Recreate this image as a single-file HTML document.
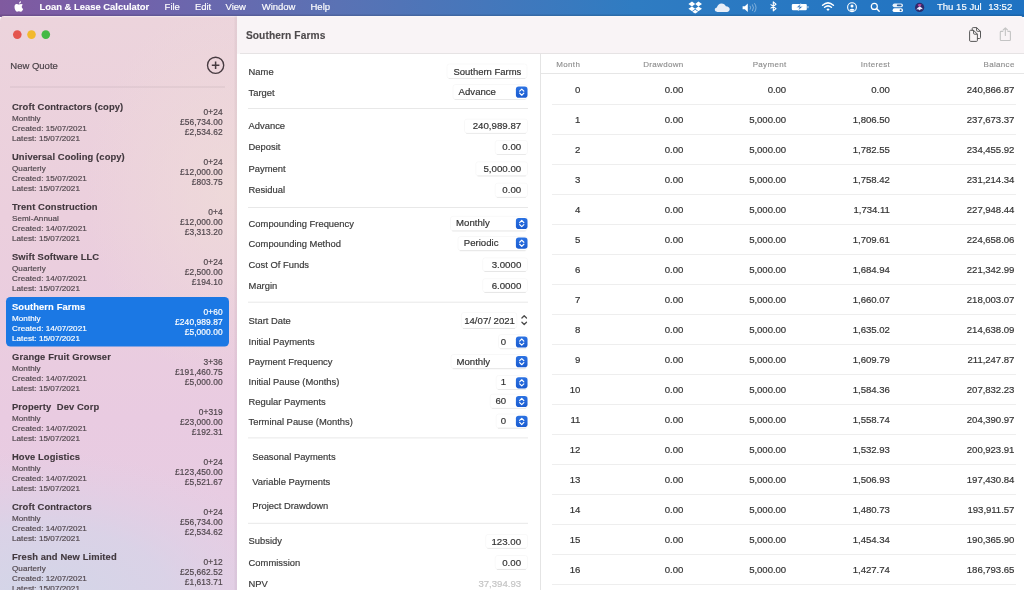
<!DOCTYPE html>
<html><head><meta charset="utf-8"><style>
html,body{margin:0;padding:0;width:1024px;height:590px;overflow:hidden;background:#fff}
svg{display:block;will-change:transform}
text{font-family:"Liberation Sans", sans-serif}
</style></head><body>
<svg width="1024" height="590" viewBox="0 0 1024 590">

<defs>
 <linearGradient id="mb" x1="0" y1="0" x2="1" y2="0">
  <stop offset="0" stop-color="#805a9f"/>
  <stop offset="0.08" stop-color="#785ea8"/>
  <stop offset="0.33" stop-color="#5a72b4"/>
  <stop offset="0.62" stop-color="#2f7cc2"/>
  <stop offset="1" stop-color="#1e72c2"/>
 </linearGradient>
 <linearGradient id="sb" x1="0" y1="0" x2="0" y2="1">
  <stop offset="0" stop-color="#ecd4dc"/>
  <stop offset="0.35" stop-color="#ebcfdd"/>
  <stop offset="0.7" stop-color="#e9cbe1"/>
  <stop offset="1" stop-color="#e6cde3"/>
 </linearGradient>
 <radialGradient id="sbw" gradientUnits="userSpaceOnUse" cx="230" cy="190" r="160" gradientTransform="translate(230,190) scale(0.9,1.2) translate(-230,-190)">
  <stop offset="0" stop-color="#efdcd8" stop-opacity="0.75"/>
  <stop offset="1" stop-color="#efdcd8" stop-opacity="0"/>
 </radialGradient>
 <radialGradient id="sbl" gradientUnits="userSpaceOnUse" cx="40" cy="600" r="200" gradientTransform="translate(40,600) scale(1.3,0.75) translate(-40,-600)">
  <stop offset="0" stop-color="#d2d6e8" stop-opacity="1"/>
  <stop offset="0.5" stop-color="#d6d4e8" stop-opacity="0.75"/>
  <stop offset="1" stop-color="#e0d0e6" stop-opacity="0"/>
 </radialGradient>
 <linearGradient id="stp" x1="0" y1="0" x2="0" y2="1">
  <stop offset="0" stop-color="#2c72e2"/>
  <stop offset="1" stop-color="#195bd0"/>
 </linearGradient>
</defs>
<rect x="0" y="0" width="1024" height="17" fill="url(#mb)"/>
<rect x="0" y="14.5" width="1024" height="2" fill="#000" opacity="0.12"/>
<path d="M0 21 Q0 16 5 16 L1019 16 Q1024 16 1024 21 L1024 590 L0 590 Z" fill="#ffffff"/>
<path d="M0 21 Q0 16 5 16 L237 16 L237 590 L0 590 Z" fill="url(#sb)"/>
<rect x="0" y="16" width="237" height="574" fill="url(#sbw)"/>
<rect x="0" y="16" width="237" height="574" fill="url(#sbl)"/>
<rect x="234.5" y="16" width="2.5" height="574" fill="#000" opacity="0.035"/>
<rect x="237" y="16" width="782" height="38" fill="#f9f4f6"/>
<path d="M1019 16 Q1024 16 1024 21 L1024 54 L1019 54 Z" fill="#f9f4f6"/>
<rect x="240" y="53" width="784" height="1" fill="#e6e3e4"/>
<rect x="4" y="16" width="1016" height="1.2" fill="#fff" opacity="0.4"/>
<text x="39.5" y="10.3" font-size="9.42" font-weight="bold" fill="#ffffff" stroke="#ffffff" stroke-width="0.12">Loan &amp; Lease Calculator</text>
<text x="164.6" y="10.2" font-size="9.5" fill="#ffffff" stroke="#fff" stroke-width="0.15">File</text>
<text x="194.9" y="10.2" font-size="9.5" fill="#ffffff" stroke="#fff" stroke-width="0.15">Edit</text>
<text x="225.5" y="10.2" font-size="9.5" fill="#ffffff" stroke="#fff" stroke-width="0.15">View</text>
<text x="261.7" y="10.2" font-size="9.5" fill="#ffffff" stroke="#fff" stroke-width="0.15">Window</text>
<text x="310.5" y="10.2" font-size="9.5" fill="#ffffff" stroke="#fff" stroke-width="0.15">Help</text>
<text x="981.7" y="10.3" font-size="9.6" text-anchor="end" fill="#ffffff" stroke="#fff" stroke-width="0.15">Thu 15 Jul</text>
<text x="1012.3" y="10.3" font-size="9.6" text-anchor="end" fill="#ffffff" stroke="#fff" stroke-width="0.15">13:52</text>
<path d="M18.9 4.6 C17.9 4.6 17.3 4.1 16.6 4.1 C15.3 4.1 14.5 5.3 14.5 7.0 C14.5 9.2 15.9 11.7 17.0 11.7 C17.7 11.7 18.1 11.3 18.9 11.3 C19.7 11.3 20.0 11.7 20.8 11.7 C21.9 11.7 22.8 9.9 23.2 8.9 C22.2 8.4 21.8 7.6 21.8 6.7 C21.8 5.9 22.3 5.2 22.9 4.8 C22.4 4.2 21.7 4.1 21.2 4.1 C20.4 4.1 19.8 4.6 18.9 4.6 Z M19.0 3.6 C19.0 2.4 19.8 1.4 21.0 1.2 C21.1 2.5 20.2 3.6 19.0 3.6 Z" fill="#fff"/>
<path d="M692 1.6 L688.4 4 L692 6.4 L695.2 4 Z M698.4 1.6 L695.2 4 L698.4 6.4 L702 4 Z M688.4 8.8 L692 11.2 L695.2 8.8 L692 6.4 Z M702 8.8 L698.4 11.2 L695.2 8.8 L698.4 6.4 Z M692.2 11.8 L695.2 13.4 L698.2 11.8 L695.2 9.8 Z" fill="#fff"/>
<path d="M717.3 11.9 C715.8 11.9 714.8 10.9 714.8 9.6 C714.8 8.4 715.7 7.5 716.9 7.4 C717.3 5.2 719.1 3.4 721.6 3.4 C723.6 3.4 725.2 4.6 725.9 6.3 C728.1 6.3 729.7 7.8 729.7 9.2 C729.7 10.6 728.6 11.9 727 11.9 Z" fill="#e9eef7"/>
<path d="M742.6 6.2 H744.8 L747.8 3.4 V12.0 L744.8 9.2 H742.6 Z" fill="#fff"/>
<path d="M750 5.8 Q751.2 7.7 750 9.6 M752.3 4.4 Q754.6 7.7 752.3 11 M754.4 3.2 Q757.6 7.7 754.4 12.2" fill="none" stroke="#fff" stroke-opacity="0.45" stroke-width="0.9"/>
<path d="M770.6 4.4 L776 8.6 L773.3 10.8 V1.8 L776 4.2 L770.6 8.4" fill="none" stroke="#fff" stroke-width="1.1" stroke-linejoin="round"/>
<rect x="791.8" y="3.9" width="15" height="6.4" rx="1.2" fill="#fff"/>
<rect x="807.3" y="5.9" width="1.3" height="2.4" rx="0.5" fill="#fff" fill-opacity="0.6"/>
<path d="M800.9 3.6 L796.6 7.6 H799.4 L798.2 10.6 L802.6 6.6 H799.8 Z" fill="#2a70bc" stroke="#fff" stroke-width="0.5"/>
<path d="M822.6 5.2 Q828 0.6 833.4 5.2 M824.6 7.3 Q828 4.4 831.4 7.3" fill="none" stroke="#fff" stroke-width="1.5" stroke-linecap="round"/>
<path d="M826.4 9.2 Q828 7.6 829.6 9.2 L828 10.9 Z" fill="#fff"/>
<circle cx="852" cy="7.2" r="4.4" fill="none" stroke="#fff" stroke-width="1.1"/>
<circle cx="852" cy="5.9" r="1.5" fill="#fff"/><path d="M849.3 9.9 Q852 7.6 854.7 9.9 Q852 11.6 849.3 9.9 Z" fill="#fff"/>
<circle cx="874.3" cy="6.4" r="3.0" fill="none" stroke="#fff" stroke-width="1.2"/><path d="M876.5 8.6 L879.2 11.3" stroke="#fff" stroke-width="1.4" stroke-linecap="round"/>
<rect x="892.6" y="3.4" width="10.4" height="3.8" rx="1.9" fill="#e8f2fb"/><rect x="896.8" y="4.4" width="4.8" height="1.8" rx="0.9" fill="#2a5f9c"/>
<rect x="892.6" y="8.3" width="10.4" height="3.8" rx="1.9" fill="#fff"/><circle cx="900.6" cy="10.2" r="1.0" fill="#2a5f9c"/>
<circle cx="919.6" cy="7.4" r="4.6" fill="#2e2a6a"/><path d="M917.6 5 Q919.4 3 921.6 4.6 Q920.6 6.6 919.4 7.2 Z" fill="#c04a9a"/><path d="M916.2 9.6 Q918.4 6 920.4 6.8 Q921.6 7.6 923 9.2 Q920.2 8.4 919.6 10.6 Q918.6 8.6 916.2 9.6 Z" fill="#eef0ff"/>
<circle cx="17.3" cy="34.6" r="4.3" fill="#e4564f"/>
<circle cx="31.5" cy="34.6" r="4.3" fill="#f2b92e"/>
<circle cx="45.8" cy="34.6" r="4.3" fill="#43b944"/>
<text x="10.3" y="68.8" font-size="9.5" fill="#4a4248" stroke="#4a4248" stroke-width="0.18">New Quote</text>
<circle cx="215.6" cy="65.3" r="8.1" fill="none" stroke="#463a40" stroke-width="1.35"/>
<path d="M215.6 61.5 V69.1 M211.8 65.3 H219.4" stroke="#463a40" stroke-width="1.5"/>
<rect x="10" y="86.5" width="215" height="1" fill="#000" opacity="0.08"/>
<text x="12" y="110.1" font-size="9.4" font-weight="bold" fill="#41383e" stroke="#41383e" stroke-width="0.12" xml:space="preserve" letter-spacing="0.1">Croft Contractors (copy)</text>
<text x="12" y="120.8" font-size="8.1" fill="#50474d" stroke="#50474d" stroke-width="0.18" letter-spacing="0.05">Monthly</text>
<text x="12" y="130.8" font-size="8.1" fill="#50474d" stroke="#50474d" stroke-width="0.18" letter-spacing="0.05">Created: 15/07/2021</text>
<text x="12" y="140.7" font-size="8.1" fill="#50474d" stroke="#50474d" stroke-width="0.18" letter-spacing="0.05">Latest: 15/07/2021</text>
<text x="222.8" y="114.8" font-size="8.4" text-anchor="end" fill="#50474d" stroke="#50474d" stroke-width="0.18" letter-spacing="0.1">0+24</text>
<text x="222.8" y="124.9" font-size="8.4" text-anchor="end" fill="#50474d" stroke="#50474d" stroke-width="0.18" letter-spacing="0.1">£56,734.00</text>
<text x="222.8" y="134.8" font-size="8.4" text-anchor="end" fill="#50474d" stroke="#50474d" stroke-width="0.18" letter-spacing="0.1">£2,534.62</text>
<text x="12" y="160.1" font-size="9.4" font-weight="bold" fill="#41383e" stroke="#41383e" stroke-width="0.12" xml:space="preserve" letter-spacing="0.1">Universal Cooling (copy)</text>
<text x="12" y="170.8" font-size="8.1" fill="#50474d" stroke="#50474d" stroke-width="0.18" letter-spacing="0.05">Quarterly</text>
<text x="12" y="180.8" font-size="8.1" fill="#50474d" stroke="#50474d" stroke-width="0.18" letter-spacing="0.05">Created: 15/07/2021</text>
<text x="12" y="190.7" font-size="8.1" fill="#50474d" stroke="#50474d" stroke-width="0.18" letter-spacing="0.05">Latest: 15/07/2021</text>
<text x="222.8" y="164.8" font-size="8.4" text-anchor="end" fill="#50474d" stroke="#50474d" stroke-width="0.18" letter-spacing="0.1">0+24</text>
<text x="222.8" y="174.9" font-size="8.4" text-anchor="end" fill="#50474d" stroke="#50474d" stroke-width="0.18" letter-spacing="0.1">£12,000.00</text>
<text x="222.8" y="184.8" font-size="8.4" text-anchor="end" fill="#50474d" stroke="#50474d" stroke-width="0.18" letter-spacing="0.1">£803.75</text>
<text x="12" y="210.1" font-size="9.4" font-weight="bold" fill="#41383e" stroke="#41383e" stroke-width="0.12" xml:space="preserve" letter-spacing="0.1">Trent Construction</text>
<text x="12" y="220.8" font-size="8.1" fill="#50474d" stroke="#50474d" stroke-width="0.18" letter-spacing="0.05">Semi-Annual</text>
<text x="12" y="230.8" font-size="8.1" fill="#50474d" stroke="#50474d" stroke-width="0.18" letter-spacing="0.05">Created: 14/07/2021</text>
<text x="12" y="240.7" font-size="8.1" fill="#50474d" stroke="#50474d" stroke-width="0.18" letter-spacing="0.05">Latest: 15/07/2021</text>
<text x="222.8" y="214.8" font-size="8.4" text-anchor="end" fill="#50474d" stroke="#50474d" stroke-width="0.18" letter-spacing="0.1">0+4</text>
<text x="222.8" y="224.9" font-size="8.4" text-anchor="end" fill="#50474d" stroke="#50474d" stroke-width="0.18" letter-spacing="0.1">£12,000.00</text>
<text x="222.8" y="234.8" font-size="8.4" text-anchor="end" fill="#50474d" stroke="#50474d" stroke-width="0.18" letter-spacing="0.1">£3,313.20</text>
<text x="12" y="260.1" font-size="9.4" font-weight="bold" fill="#41383e" stroke="#41383e" stroke-width="0.12" xml:space="preserve" letter-spacing="0.1">Swift Software LLC</text>
<text x="12" y="270.8" font-size="8.1" fill="#50474d" stroke="#50474d" stroke-width="0.18" letter-spacing="0.05">Quarterly</text>
<text x="12" y="280.8" font-size="8.1" fill="#50474d" stroke="#50474d" stroke-width="0.18" letter-spacing="0.05">Created: 14/07/2021</text>
<text x="12" y="290.7" font-size="8.1" fill="#50474d" stroke="#50474d" stroke-width="0.18" letter-spacing="0.05">Latest: 15/07/2021</text>
<text x="222.8" y="264.8" font-size="8.4" text-anchor="end" fill="#50474d" stroke="#50474d" stroke-width="0.18" letter-spacing="0.1">0+24</text>
<text x="222.8" y="274.9" font-size="8.4" text-anchor="end" fill="#50474d" stroke="#50474d" stroke-width="0.18" letter-spacing="0.1">£2,500.00</text>
<text x="222.8" y="284.8" font-size="8.4" text-anchor="end" fill="#50474d" stroke="#50474d" stroke-width="0.18" letter-spacing="0.1">£194.10</text>
<rect x="6" y="297" width="223" height="49.5" rx="4.5" fill="#1b78e4"/>
<text x="12" y="310.1" font-size="9.4" font-weight="bold" fill="#ffffff" stroke="#ffffff" stroke-width="0.12" xml:space="preserve" letter-spacing="0.1">Southern Farms</text>
<text x="12" y="320.8" font-size="8.1" fill="#ffffff" stroke="#ffffff" stroke-width="0.18" letter-spacing="0.05">Monthly</text>
<text x="12" y="330.8" font-size="8.1" fill="#ffffff" stroke="#ffffff" stroke-width="0.18" letter-spacing="0.05">Created: 14/07/2021</text>
<text x="12" y="340.7" font-size="8.1" fill="#ffffff" stroke="#ffffff" stroke-width="0.18" letter-spacing="0.05">Latest: 15/07/2021</text>
<text x="222.8" y="314.8" font-size="8.4" text-anchor="end" fill="#ffffff" stroke="#ffffff" stroke-width="0.18" letter-spacing="0.1">0+60</text>
<text x="222.8" y="324.9" font-size="8.4" text-anchor="end" fill="#ffffff" stroke="#ffffff" stroke-width="0.18" letter-spacing="0.1">£240,989.87</text>
<text x="222.8" y="334.8" font-size="8.4" text-anchor="end" fill="#ffffff" stroke="#ffffff" stroke-width="0.18" letter-spacing="0.1">£5,000.00</text>
<text x="12" y="360.1" font-size="9.4" font-weight="bold" fill="#41383e" stroke="#41383e" stroke-width="0.12" xml:space="preserve" letter-spacing="0.1">Grange Fruit Growser</text>
<text x="12" y="370.8" font-size="8.1" fill="#50474d" stroke="#50474d" stroke-width="0.18" letter-spacing="0.05">Monthly</text>
<text x="12" y="380.8" font-size="8.1" fill="#50474d" stroke="#50474d" stroke-width="0.18" letter-spacing="0.05">Created: 14/07/2021</text>
<text x="12" y="390.7" font-size="8.1" fill="#50474d" stroke="#50474d" stroke-width="0.18" letter-spacing="0.05">Latest: 15/07/2021</text>
<text x="222.8" y="364.8" font-size="8.4" text-anchor="end" fill="#50474d" stroke="#50474d" stroke-width="0.18" letter-spacing="0.1">3+36</text>
<text x="222.8" y="374.9" font-size="8.4" text-anchor="end" fill="#50474d" stroke="#50474d" stroke-width="0.18" letter-spacing="0.1">£191,460.75</text>
<text x="222.8" y="384.8" font-size="8.4" text-anchor="end" fill="#50474d" stroke="#50474d" stroke-width="0.18" letter-spacing="0.1">£5,000.00</text>
<text x="12" y="410.1" font-size="9.4" font-weight="bold" fill="#41383e" stroke="#41383e" stroke-width="0.12" xml:space="preserve" letter-spacing="0.1">Property  Dev Corp</text>
<text x="12" y="420.8" font-size="8.1" fill="#50474d" stroke="#50474d" stroke-width="0.18" letter-spacing="0.05">Monthly</text>
<text x="12" y="430.8" font-size="8.1" fill="#50474d" stroke="#50474d" stroke-width="0.18" letter-spacing="0.05">Created: 14/07/2021</text>
<text x="12" y="440.7" font-size="8.1" fill="#50474d" stroke="#50474d" stroke-width="0.18" letter-spacing="0.05">Latest: 15/07/2021</text>
<text x="222.8" y="414.8" font-size="8.4" text-anchor="end" fill="#50474d" stroke="#50474d" stroke-width="0.18" letter-spacing="0.1">0+319</text>
<text x="222.8" y="424.9" font-size="8.4" text-anchor="end" fill="#50474d" stroke="#50474d" stroke-width="0.18" letter-spacing="0.1">£23,000.00</text>
<text x="222.8" y="434.8" font-size="8.4" text-anchor="end" fill="#50474d" stroke="#50474d" stroke-width="0.18" letter-spacing="0.1">£192.31</text>
<text x="12" y="460.1" font-size="9.4" font-weight="bold" fill="#41383e" stroke="#41383e" stroke-width="0.12" xml:space="preserve" letter-spacing="0.1">Hove Logistics</text>
<text x="12" y="470.8" font-size="8.1" fill="#50474d" stroke="#50474d" stroke-width="0.18" letter-spacing="0.05">Monthly</text>
<text x="12" y="480.8" font-size="8.1" fill="#50474d" stroke="#50474d" stroke-width="0.18" letter-spacing="0.05">Created: 14/07/2021</text>
<text x="12" y="490.7" font-size="8.1" fill="#50474d" stroke="#50474d" stroke-width="0.18" letter-spacing="0.05">Latest: 15/07/2021</text>
<text x="222.8" y="464.8" font-size="8.4" text-anchor="end" fill="#50474d" stroke="#50474d" stroke-width="0.18" letter-spacing="0.1">0+24</text>
<text x="222.8" y="474.9" font-size="8.4" text-anchor="end" fill="#50474d" stroke="#50474d" stroke-width="0.18" letter-spacing="0.1">£123,450.00</text>
<text x="222.8" y="484.8" font-size="8.4" text-anchor="end" fill="#50474d" stroke="#50474d" stroke-width="0.18" letter-spacing="0.1">£5,521.67</text>
<text x="12" y="510.1" font-size="9.4" font-weight="bold" fill="#41383e" stroke="#41383e" stroke-width="0.12" xml:space="preserve" letter-spacing="0.1">Croft Contractors</text>
<text x="12" y="520.8" font-size="8.1" fill="#50474d" stroke="#50474d" stroke-width="0.18" letter-spacing="0.05">Monthly</text>
<text x="12" y="530.8" font-size="8.1" fill="#50474d" stroke="#50474d" stroke-width="0.18" letter-spacing="0.05">Created: 14/07/2021</text>
<text x="12" y="540.7" font-size="8.1" fill="#50474d" stroke="#50474d" stroke-width="0.18" letter-spacing="0.05">Latest: 15/07/2021</text>
<text x="222.8" y="514.8" font-size="8.4" text-anchor="end" fill="#50474d" stroke="#50474d" stroke-width="0.18" letter-spacing="0.1">0+24</text>
<text x="222.8" y="524.9" font-size="8.4" text-anchor="end" fill="#50474d" stroke="#50474d" stroke-width="0.18" letter-spacing="0.1">£56,734.00</text>
<text x="222.8" y="534.8" font-size="8.4" text-anchor="end" fill="#50474d" stroke="#50474d" stroke-width="0.18" letter-spacing="0.1">£2,534.62</text>
<text x="12" y="560.1" font-size="9.4" font-weight="bold" fill="#41383e" stroke="#41383e" stroke-width="0.12" xml:space="preserve" letter-spacing="0.1">Fresh and New Limited</text>
<text x="12" y="570.8" font-size="8.1" fill="#50474d" stroke="#50474d" stroke-width="0.18" letter-spacing="0.05">Quarterly</text>
<text x="12" y="580.8" font-size="8.1" fill="#50474d" stroke="#50474d" stroke-width="0.18" letter-spacing="0.05">Created: 12/07/2021</text>
<text x="12" y="590.7" font-size="8.1" fill="#50474d" stroke="#50474d" stroke-width="0.18" letter-spacing="0.05">Latest: 15/07/2021</text>
<text x="222.8" y="564.8" font-size="8.4" text-anchor="end" fill="#50474d" stroke="#50474d" stroke-width="0.18" letter-spacing="0.1">0+12</text>
<text x="222.8" y="574.9" font-size="8.4" text-anchor="end" fill="#50474d" stroke="#50474d" stroke-width="0.18" letter-spacing="0.1">£25,662.52</text>
<text x="222.8" y="584.8" font-size="8.4" text-anchor="end" fill="#50474d" stroke="#50474d" stroke-width="0.18" letter-spacing="0.1">£1,613.71</text>
<text x="245.9" y="38.9" font-size="10.2" font-weight="bold" fill="#4e4a4c" stroke="#4e4a4c" stroke-width="0.12" letter-spacing="0.1">Southern Farms</text>
<g fill="none" stroke="#585858" stroke-width="1.0" stroke-linejoin="round" stroke-linecap="round"><path d="M972.2 30.2 V28.6 Q972.2 27.6 973.2 27.6 H976.6 L980.5 31.3 V37.6 Q980.5 38.5 979.6 38.5 H977.6"/><path d="M976.6 27.8 V30.4 Q976.6 31.3 977.5 31.3 H980.3"/><path d="M969.6 31.2 Q969.6 30.3 970.5 30.3 H973.6 L977.4 34.2 V40.5 Q977.4 41.4 976.5 41.4 H970.5 Q969.6 41.4 969.6 40.5 Z"/><path d="M973.6 30.5 V33.3 Q973.6 34.2 974.5 34.2 H977.2"/></g>
<g fill="none" stroke="#c4c4c4" stroke-width="1.1" stroke-linecap="round" stroke-linejoin="round"><path d="M1002.8 31.4 H1001.1 Q1000.3 31.4 1000.3 32.2 V39.7 Q1000.3 40.5 1001.1 40.5 H1009.6 Q1010.4 40.5 1010.4 39.7 V32.2 Q1010.4 31.4 1009.6 31.4 H1007.9"/><path d="M1005.35 35.4 V27.9 M1003.2 30 L1005.35 27.8 L1007.5 30"/></g>
<rect x="540" y="54" width="1" height="536" fill="#e4e4e4"/>
<text x="248.6" y="75.1" font-size="9.4" fill="#3a3a3a" stroke="#3a3a3a" stroke-width="0.18">Name</text>
<text x="248.6" y="95.8" font-size="9.4" fill="#3a3a3a" stroke="#3a3a3a" stroke-width="0.18">Target</text>
<text x="248.6" y="129.1" font-size="9.4" fill="#3a3a3a" stroke="#3a3a3a" stroke-width="0.18">Advance</text>
<text x="248.6" y="150.4" font-size="9.4" fill="#3a3a3a" stroke="#3a3a3a" stroke-width="0.18">Deposit</text>
<text x="248.6" y="171.8" font-size="9.4" fill="#3a3a3a" stroke="#3a3a3a" stroke-width="0.18">Payment</text>
<text x="248.6" y="193.1" font-size="9.4" fill="#3a3a3a" stroke="#3a3a3a" stroke-width="0.18">Residual</text>
<text x="248.6" y="227" font-size="9.4" fill="#3a3a3a" stroke="#3a3a3a" stroke-width="0.18">Compounding Frequency</text>
<text x="248.6" y="247" font-size="9.4" fill="#3a3a3a" stroke="#3a3a3a" stroke-width="0.18">Compounding Method</text>
<text x="248.6" y="267.5" font-size="9.4" fill="#3a3a3a" stroke="#3a3a3a" stroke-width="0.18">Cost Of Funds</text>
<text x="248.6" y="288.9" font-size="9.4" fill="#3a3a3a" stroke="#3a3a3a" stroke-width="0.18">Margin</text>
<text x="248.6" y="324" font-size="9.4" fill="#3a3a3a" stroke="#3a3a3a" stroke-width="0.18">Start Date</text>
<text x="248.6" y="345.3" font-size="9.4" fill="#3a3a3a" stroke="#3a3a3a" stroke-width="0.18">Initial Payments</text>
<text x="248.6" y="365" font-size="9.4" fill="#3a3a3a" stroke="#3a3a3a" stroke-width="0.18">Payment Frequency</text>
<text x="248.6" y="385" font-size="9.4" fill="#3a3a3a" stroke="#3a3a3a" stroke-width="0.18">Initial Pause (Months)</text>
<text x="248.6" y="404.9" font-size="9.4" fill="#3a3a3a" stroke="#3a3a3a" stroke-width="0.18">Regular Payments</text>
<text x="248.6" y="424.8" font-size="9.4" fill="#3a3a3a" stroke="#3a3a3a" stroke-width="0.18">Terminal Pause (Months)</text>
<text x="248.6" y="544.2" font-size="9.4" fill="#3a3a3a" stroke="#3a3a3a" stroke-width="0.18">Subsidy</text>
<text x="248.6" y="565.8" font-size="9.4" fill="#3a3a3a" stroke="#3a3a3a" stroke-width="0.18">Commission</text>
<text x="248.6" y="587.4" font-size="9.4" fill="#3a3a3a" stroke="#3a3a3a" stroke-width="0.18">NPV</text>
<text x="252.2" y="460.3" font-size="9.4" fill="#3a3a3a" stroke="#3a3a3a" stroke-width="0.18">Seasonal Payments</text>
<text x="252.2" y="484.5" font-size="9.4" fill="#3a3a3a" stroke="#3a3a3a" stroke-width="0.18">Variable Payments</text>
<text x="252.2" y="508.6" font-size="9.4" fill="#3a3a3a" stroke="#3a3a3a" stroke-width="0.18">Project Drawdown</text>
<rect x="248" y="108.0" width="280" height="1" fill="#e8e8e8"/>
<rect x="248" y="207.0" width="280" height="1" fill="#e8e8e8"/>
<rect x="248" y="301.7" width="280" height="1" fill="#e8e8e8"/>
<rect x="248" y="437.4" width="280" height="1" fill="#e8e8e8"/>
<rect x="248" y="522.8" width="280" height="1" fill="#e8e8e8"/>
<rect x="447" y="64" width="80" height="14.400000000000006" rx="2.5" fill="#fff" stroke="#000" stroke-opacity="0.035" stroke-width="0.8"/>
<rect x="448.5" y="78.2" width="77" height="0.9" rx="0.4" fill="#000" opacity="0.08"/>
<text x="521.3" y="75.1" font-size="9.47" text-anchor="end" fill="#333333" stroke="#333333" stroke-width="0.18">Southern Farms</text>
<rect x="453" y="84.5" width="74.20000000000005" height="14.900000000000006" rx="2.5" fill="#fff" stroke="#000" stroke-opacity="0.035" stroke-width="0.8"/>
<rect x="454.5" y="99.2" width="71.20000000000005" height="0.9" rx="0.4" fill="#000" opacity="0.08"/>
<text x="458.6" y="94.9" font-size="9.6" fill="#333333" stroke="#333333" stroke-width="0.18">Advance</text>
<rect x="515.9" y="86.5" width="11.6" height="11.2" rx="2.8" fill="url(#stp)"/>
<path d="M519.65 91.15 l2.1 -2.1 l2.1 2.1 M519.65 93.15 l2.1 2.1 l2.1 -2.1" fill="none" stroke="#fff" stroke-width="1.15" stroke-linecap="round" stroke-linejoin="round"/>
<rect x="464.5" y="119.1" width="63.0" height="14.0" rx="2.5" fill="#fff" stroke="#000" stroke-opacity="0.035" stroke-width="0.8"/>
<rect x="466.0" y="132.9" width="60.0" height="0.9" rx="0.4" fill="#000" opacity="0.08"/>
<text x="521.2" y="129.1" font-size="9.7" text-anchor="end" fill="#333333" stroke="#333333" stroke-width="0.18">240,989.87</text>
<rect x="495.2" y="140.4" width="32.30000000000001" height="14.0" rx="2.5" fill="#fff" stroke="#000" stroke-opacity="0.035" stroke-width="0.8"/>
<rect x="496.7" y="154.20000000000002" width="29.30000000000001" height="0.9" rx="0.4" fill="#000" opacity="0.08"/>
<text x="521.2" y="150.4" font-size="9.7" text-anchor="end" fill="#333333" stroke="#333333" stroke-width="0.18">0.00</text>
<rect x="475.8" y="161.8" width="51.69999999999999" height="14.0" rx="2.5" fill="#fff" stroke="#000" stroke-opacity="0.035" stroke-width="0.8"/>
<rect x="477.3" y="175.60000000000002" width="48.69999999999999" height="0.9" rx="0.4" fill="#000" opacity="0.08"/>
<text x="521.2" y="171.8" font-size="9.7" text-anchor="end" fill="#333333" stroke="#333333" stroke-width="0.18">5,000.00</text>
<rect x="495.2" y="183.1" width="32.30000000000001" height="14.0" rx="2.5" fill="#fff" stroke="#000" stroke-opacity="0.035" stroke-width="0.8"/>
<rect x="496.7" y="196.9" width="29.30000000000001" height="0.9" rx="0.4" fill="#000" opacity="0.08"/>
<text x="521.2" y="193.1" font-size="9.7" text-anchor="end" fill="#333333" stroke="#333333" stroke-width="0.18">0.00</text>
<rect x="450.5" y="216.3" width="76.79999999999995" height="14.5" rx="2.5" fill="#fff" stroke="#000" stroke-opacity="0.035" stroke-width="0.8"/>
<rect x="452.0" y="230.60000000000002" width="73.79999999999995" height="0.9" rx="0.4" fill="#000" opacity="0.08"/>
<text x="456.1" y="226.3" font-size="9.6" fill="#333333" stroke="#333333" stroke-width="0.18">Monthly</text>
<rect x="515.9" y="217.9" width="11.6" height="11.2" rx="2.8" fill="url(#stp)"/>
<path d="M519.65 222.55 l2.1 -2.1 l2.1 2.1 M519.65 224.55 l2.1 2.1 l2.1 -2.1" fill="none" stroke="#fff" stroke-width="1.15" stroke-linecap="round" stroke-linejoin="round"/>
<rect x="458" y="236.5" width="69.29999999999995" height="14.0" rx="2.5" fill="#fff" stroke="#000" stroke-opacity="0.035" stroke-width="0.8"/>
<rect x="459.5" y="250.3" width="66.29999999999995" height="0.9" rx="0.4" fill="#000" opacity="0.08"/>
<text x="463.8" y="246.1" font-size="9.6" fill="#333333" stroke="#333333" stroke-width="0.18">Periodic</text>
<rect x="515.9" y="237.6" width="11.6" height="11.2" rx="2.8" fill="url(#stp)"/>
<path d="M519.65 242.25 l2.1 -2.1 l2.1 2.1 M519.65 244.25 l2.1 2.1 l2.1 -2.1" fill="none" stroke="#fff" stroke-width="1.15" stroke-linecap="round" stroke-linejoin="round"/>
<rect x="482.7" y="257.8" width="44.80000000000001" height="13.5" rx="2.5" fill="#fff" stroke="#000" stroke-opacity="0.035" stroke-width="0.8"/>
<rect x="484.2" y="271.1" width="41.80000000000001" height="0.9" rx="0.4" fill="#000" opacity="0.08"/>
<text x="521.3" y="267.8" font-size="9.7" text-anchor="end" fill="#333333" stroke="#333333" stroke-width="0.18">3.0000</text>
<rect x="482.7" y="278.7" width="44.80000000000001" height="13.5" rx="2.5" fill="#fff" stroke="#000" stroke-opacity="0.035" stroke-width="0.8"/>
<rect x="484.2" y="292.0" width="41.80000000000001" height="0.9" rx="0.4" fill="#000" opacity="0.08"/>
<text x="521.3" y="288.7" font-size="9.7" text-anchor="end" fill="#333333" stroke="#333333" stroke-width="0.18">6.0000</text>
<rect x="461.3" y="312.6" width="55.49999999999994" height="15.699999999999989" rx="2.5" fill="#fff" stroke="#000" stroke-opacity="0.035" stroke-width="0.8"/>
<rect x="462.8" y="328.1" width="52.49999999999994" height="0.9" rx="0.4" fill="#000" opacity="0.08"/>
<text x="514.9" y="323.7" font-size="9.6" text-anchor="end" fill="#333333" stroke="#333333" stroke-width="0.18" xml:space="preserve">14/07/ 2021</text>
<path d="M521.9 318.0 l2.3 -2.3 l2.3 2.3 M521.9 322.2 l2.3 2.3 l2.3 -2.3" fill="none" stroke="#4a4a4a" stroke-width="1.25" stroke-linecap="round" stroke-linejoin="round"/>
<rect x="498.5" y="334.6" width="29.0" height="14.0" rx="2.5" fill="#fff" stroke="#000" stroke-opacity="0.035" stroke-width="0.8"/>
<rect x="500.0" y="348.40000000000003" width="26.0" height="0.9" rx="0.4" fill="#000" opacity="0.08"/>
<text x="506.2" y="344.6" font-size="9.6" text-anchor="end" fill="#333333" stroke="#333333" stroke-width="0.18">0</text>
<rect x="515.9" y="336.40000000000003" width="11.6" height="11.2" rx="2.8" fill="url(#stp)"/>
<path d="M519.65 341.05 l2.1 -2.1 l2.1 2.1 M519.65 343.05 l2.1 2.1 l2.1 -2.1" fill="none" stroke="#fff" stroke-width="1.15" stroke-linecap="round" stroke-linejoin="round"/>
<rect x="496.2" y="375.4" width="31.30000000000001" height="14.0" rx="2.5" fill="#fff" stroke="#000" stroke-opacity="0.035" stroke-width="0.8"/>
<rect x="497.7" y="389.2" width="28.30000000000001" height="0.9" rx="0.4" fill="#000" opacity="0.08"/>
<text x="506.2" y="385.4" font-size="9.6" text-anchor="end" fill="#333333" stroke="#333333" stroke-width="0.18">1</text>
<rect x="515.9" y="377.2" width="11.6" height="11.2" rx="2.8" fill="url(#stp)"/>
<path d="M519.65 381.84999999999997 l2.1 -2.1 l2.1 2.1 M519.65 383.84999999999997 l2.1 2.1 l2.1 -2.1" fill="none" stroke="#fff" stroke-width="1.15" stroke-linecap="round" stroke-linejoin="round"/>
<rect x="490.2" y="394.1" width="37.30000000000001" height="14.0" rx="2.5" fill="#fff" stroke="#000" stroke-opacity="0.035" stroke-width="0.8"/>
<rect x="491.7" y="407.90000000000003" width="34.30000000000001" height="0.9" rx="0.4" fill="#000" opacity="0.08"/>
<text x="506.2" y="404.1" font-size="9.6" text-anchor="end" fill="#333333" stroke="#333333" stroke-width="0.18">60</text>
<rect x="515.9" y="395.90000000000003" width="11.6" height="11.2" rx="2.8" fill="url(#stp)"/>
<path d="M519.65 400.55 l2.1 -2.1 l2.1 2.1 M519.65 402.55 l2.1 2.1 l2.1 -2.1" fill="none" stroke="#fff" stroke-width="1.15" stroke-linecap="round" stroke-linejoin="round"/>
<rect x="496.2" y="414" width="31.30000000000001" height="14" rx="2.5" fill="#fff" stroke="#000" stroke-opacity="0.035" stroke-width="0.8"/>
<rect x="497.7" y="427.8" width="28.30000000000001" height="0.9" rx="0.4" fill="#000" opacity="0.08"/>
<text x="506.2" y="424" font-size="9.6" text-anchor="end" fill="#333333" stroke="#333333" stroke-width="0.18">0</text>
<rect x="515.9" y="415.8" width="11.6" height="11.2" rx="2.8" fill="url(#stp)"/>
<path d="M519.65 420.45 l2.1 -2.1 l2.1 2.1 M519.65 422.45 l2.1 2.1 l2.1 -2.1" fill="none" stroke="#fff" stroke-width="1.15" stroke-linecap="round" stroke-linejoin="round"/>
<rect x="451" y="354.5" width="76.29999999999995" height="14.0" rx="2.5" fill="#fff" stroke="#000" stroke-opacity="0.035" stroke-width="0.8"/>
<rect x="452.5" y="368.3" width="73.29999999999995" height="0.9" rx="0.4" fill="#000" opacity="0.08"/>
<text x="456.5" y="364.5" font-size="9.6" fill="#333333" stroke="#333333" stroke-width="0.18">Monthly</text>
<rect x="515.9" y="356" width="11.6" height="11.2" rx="2.8" fill="url(#stp)"/>
<path d="M519.65 360.65 l2.1 -2.1 l2.1 2.1 M519.65 362.65 l2.1 2.1 l2.1 -2.1" fill="none" stroke="#fff" stroke-width="1.15" stroke-linecap="round" stroke-linejoin="round"/>
<rect x="485.7" y="534.4" width="41.900000000000034" height="13.700000000000045" rx="2.5" fill="#fff" stroke="#000" stroke-opacity="0.035" stroke-width="0.8"/>
<rect x="487.2" y="547.9" width="38.900000000000034" height="0.9" rx="0.4" fill="#000" opacity="0.08"/>
<text x="521.1" y="544.6" font-size="9.7" text-anchor="end" fill="#333333" stroke="#333333" stroke-width="0.18">123.00</text>
<rect x="495.2" y="555.5" width="32.400000000000034" height="13.700000000000045" rx="2.5" fill="#fff" stroke="#000" stroke-opacity="0.035" stroke-width="0.8"/>
<rect x="496.7" y="569.0" width="29.400000000000034" height="0.9" rx="0.4" fill="#000" opacity="0.08"/>
<text x="521.1" y="565.7" font-size="9.7" text-anchor="end" fill="#333333" stroke="#333333" stroke-width="0.18">0.00</text>
<text x="521.1" y="586.7" font-size="9.6" text-anchor="end" fill="#c4c4c4" stroke="#c4c4c4" stroke-width="0.18">37,394.93</text>
<text x="556.3" y="66.5" font-size="8.0" fill="#8c8c8c" stroke="#8c8c8c" stroke-width="0.12" letter-spacing="0.33">Month</text>
<text x="683.63" y="66.5" font-size="8.0" text-anchor="end" fill="#8c8c8c" stroke="#8c8c8c" stroke-width="0.12" letter-spacing="0.33">Drawdown</text>
<text x="786.53" y="66.5" font-size="8.0" text-anchor="end" fill="#8c8c8c" stroke="#8c8c8c" stroke-width="0.12" letter-spacing="0.33">Payment</text>
<text x="890.13" y="66.5" font-size="8.0" text-anchor="end" fill="#8c8c8c" stroke="#8c8c8c" stroke-width="0.12" letter-spacing="0.33">Interest</text>
<text x="1014.73" y="66.5" font-size="8.0" text-anchor="end" fill="#8c8c8c" stroke="#8c8c8c" stroke-width="0.12" letter-spacing="0.33">Balance</text>
<rect x="541" y="73" width="483" height="1" fill="#e6e6e6"/>
<text x="580.25" y="92.8" font-size="9.6" text-anchor="end" fill="#333333" stroke="#333333" stroke-width="0.18" letter-spacing="-0.05">0</text>
<text x="683.25" y="92.8" font-size="9.6" text-anchor="end" fill="#333333" stroke="#333333" stroke-width="0.18" letter-spacing="-0.05">0.00</text>
<text x="786.15" y="92.8" font-size="9.6" text-anchor="end" fill="#333333" stroke="#333333" stroke-width="0.18" letter-spacing="-0.05">0.00</text>
<text x="889.75" y="92.8" font-size="9.6" text-anchor="end" fill="#333333" stroke="#333333" stroke-width="0.18" letter-spacing="-0.05">0.00</text>
<text x="1014.35" y="92.8" font-size="9.6" text-anchor="end" fill="#333333" stroke="#333333" stroke-width="0.18" letter-spacing="-0.05">240,866.87</text>
<rect x="552" y="104" width="464" height="1" fill="#eeeeee"/>
<text x="580.25" y="122.8" font-size="9.6" text-anchor="end" fill="#333333" stroke="#333333" stroke-width="0.18" letter-spacing="-0.05">1</text>
<text x="683.25" y="122.8" font-size="9.6" text-anchor="end" fill="#333333" stroke="#333333" stroke-width="0.18" letter-spacing="-0.05">0.00</text>
<text x="786.15" y="122.8" font-size="9.6" text-anchor="end" fill="#333333" stroke="#333333" stroke-width="0.18" letter-spacing="-0.05">5,000.00</text>
<text x="889.75" y="122.8" font-size="9.6" text-anchor="end" fill="#333333" stroke="#333333" stroke-width="0.18" letter-spacing="-0.05">1,806.50</text>
<text x="1014.35" y="122.8" font-size="9.6" text-anchor="end" fill="#333333" stroke="#333333" stroke-width="0.18" letter-spacing="-0.05">237,673.37</text>
<rect x="552" y="134" width="464" height="1" fill="#eeeeee"/>
<text x="580.25" y="152.8" font-size="9.6" text-anchor="end" fill="#333333" stroke="#333333" stroke-width="0.18" letter-spacing="-0.05">2</text>
<text x="683.25" y="152.8" font-size="9.6" text-anchor="end" fill="#333333" stroke="#333333" stroke-width="0.18" letter-spacing="-0.05">0.00</text>
<text x="786.15" y="152.8" font-size="9.6" text-anchor="end" fill="#333333" stroke="#333333" stroke-width="0.18" letter-spacing="-0.05">5,000.00</text>
<text x="889.75" y="152.8" font-size="9.6" text-anchor="end" fill="#333333" stroke="#333333" stroke-width="0.18" letter-spacing="-0.05">1,782.55</text>
<text x="1014.35" y="152.8" font-size="9.6" text-anchor="end" fill="#333333" stroke="#333333" stroke-width="0.18" letter-spacing="-0.05">234,455.92</text>
<rect x="552" y="164" width="464" height="1" fill="#eeeeee"/>
<text x="580.25" y="182.8" font-size="9.6" text-anchor="end" fill="#333333" stroke="#333333" stroke-width="0.18" letter-spacing="-0.05">3</text>
<text x="683.25" y="182.8" font-size="9.6" text-anchor="end" fill="#333333" stroke="#333333" stroke-width="0.18" letter-spacing="-0.05">0.00</text>
<text x="786.15" y="182.8" font-size="9.6" text-anchor="end" fill="#333333" stroke="#333333" stroke-width="0.18" letter-spacing="-0.05">5,000.00</text>
<text x="889.75" y="182.8" font-size="9.6" text-anchor="end" fill="#333333" stroke="#333333" stroke-width="0.18" letter-spacing="-0.05">1,758.42</text>
<text x="1014.35" y="182.8" font-size="9.6" text-anchor="end" fill="#333333" stroke="#333333" stroke-width="0.18" letter-spacing="-0.05">231,214.34</text>
<rect x="552" y="194" width="464" height="1" fill="#eeeeee"/>
<text x="580.25" y="212.8" font-size="9.6" text-anchor="end" fill="#333333" stroke="#333333" stroke-width="0.18" letter-spacing="-0.05">4</text>
<text x="683.25" y="212.8" font-size="9.6" text-anchor="end" fill="#333333" stroke="#333333" stroke-width="0.18" letter-spacing="-0.05">0.00</text>
<text x="786.15" y="212.8" font-size="9.6" text-anchor="end" fill="#333333" stroke="#333333" stroke-width="0.18" letter-spacing="-0.05">5,000.00</text>
<text x="889.75" y="212.8" font-size="9.6" text-anchor="end" fill="#333333" stroke="#333333" stroke-width="0.18" letter-spacing="-0.05">1,734.11</text>
<text x="1014.35" y="212.8" font-size="9.6" text-anchor="end" fill="#333333" stroke="#333333" stroke-width="0.18" letter-spacing="-0.05">227,948.44</text>
<rect x="552" y="224" width="464" height="1" fill="#eeeeee"/>
<text x="580.25" y="242.8" font-size="9.6" text-anchor="end" fill="#333333" stroke="#333333" stroke-width="0.18" letter-spacing="-0.05">5</text>
<text x="683.25" y="242.8" font-size="9.6" text-anchor="end" fill="#333333" stroke="#333333" stroke-width="0.18" letter-spacing="-0.05">0.00</text>
<text x="786.15" y="242.8" font-size="9.6" text-anchor="end" fill="#333333" stroke="#333333" stroke-width="0.18" letter-spacing="-0.05">5,000.00</text>
<text x="889.75" y="242.8" font-size="9.6" text-anchor="end" fill="#333333" stroke="#333333" stroke-width="0.18" letter-spacing="-0.05">1,709.61</text>
<text x="1014.35" y="242.8" font-size="9.6" text-anchor="end" fill="#333333" stroke="#333333" stroke-width="0.18" letter-spacing="-0.05">224,658.06</text>
<rect x="552" y="254" width="464" height="1" fill="#eeeeee"/>
<text x="580.25" y="272.8" font-size="9.6" text-anchor="end" fill="#333333" stroke="#333333" stroke-width="0.18" letter-spacing="-0.05">6</text>
<text x="683.25" y="272.8" font-size="9.6" text-anchor="end" fill="#333333" stroke="#333333" stroke-width="0.18" letter-spacing="-0.05">0.00</text>
<text x="786.15" y="272.8" font-size="9.6" text-anchor="end" fill="#333333" stroke="#333333" stroke-width="0.18" letter-spacing="-0.05">5,000.00</text>
<text x="889.75" y="272.8" font-size="9.6" text-anchor="end" fill="#333333" stroke="#333333" stroke-width="0.18" letter-spacing="-0.05">1,684.94</text>
<text x="1014.35" y="272.8" font-size="9.6" text-anchor="end" fill="#333333" stroke="#333333" stroke-width="0.18" letter-spacing="-0.05">221,342.99</text>
<rect x="552" y="284" width="464" height="1" fill="#eeeeee"/>
<text x="580.25" y="302.8" font-size="9.6" text-anchor="end" fill="#333333" stroke="#333333" stroke-width="0.18" letter-spacing="-0.05">7</text>
<text x="683.25" y="302.8" font-size="9.6" text-anchor="end" fill="#333333" stroke="#333333" stroke-width="0.18" letter-spacing="-0.05">0.00</text>
<text x="786.15" y="302.8" font-size="9.6" text-anchor="end" fill="#333333" stroke="#333333" stroke-width="0.18" letter-spacing="-0.05">5,000.00</text>
<text x="889.75" y="302.8" font-size="9.6" text-anchor="end" fill="#333333" stroke="#333333" stroke-width="0.18" letter-spacing="-0.05">1,660.07</text>
<text x="1014.35" y="302.8" font-size="9.6" text-anchor="end" fill="#333333" stroke="#333333" stroke-width="0.18" letter-spacing="-0.05">218,003.07</text>
<rect x="552" y="314" width="464" height="1" fill="#eeeeee"/>
<text x="580.25" y="332.8" font-size="9.6" text-anchor="end" fill="#333333" stroke="#333333" stroke-width="0.18" letter-spacing="-0.05">8</text>
<text x="683.25" y="332.8" font-size="9.6" text-anchor="end" fill="#333333" stroke="#333333" stroke-width="0.18" letter-spacing="-0.05">0.00</text>
<text x="786.15" y="332.8" font-size="9.6" text-anchor="end" fill="#333333" stroke="#333333" stroke-width="0.18" letter-spacing="-0.05">5,000.00</text>
<text x="889.75" y="332.8" font-size="9.6" text-anchor="end" fill="#333333" stroke="#333333" stroke-width="0.18" letter-spacing="-0.05">1,635.02</text>
<text x="1014.35" y="332.8" font-size="9.6" text-anchor="end" fill="#333333" stroke="#333333" stroke-width="0.18" letter-spacing="-0.05">214,638.09</text>
<rect x="552" y="344" width="464" height="1" fill="#eeeeee"/>
<text x="580.25" y="362.8" font-size="9.6" text-anchor="end" fill="#333333" stroke="#333333" stroke-width="0.18" letter-spacing="-0.05">9</text>
<text x="683.25" y="362.8" font-size="9.6" text-anchor="end" fill="#333333" stroke="#333333" stroke-width="0.18" letter-spacing="-0.05">0.00</text>
<text x="786.15" y="362.8" font-size="9.6" text-anchor="end" fill="#333333" stroke="#333333" stroke-width="0.18" letter-spacing="-0.05">5,000.00</text>
<text x="889.75" y="362.8" font-size="9.6" text-anchor="end" fill="#333333" stroke="#333333" stroke-width="0.18" letter-spacing="-0.05">1,609.79</text>
<text x="1014.35" y="362.8" font-size="9.6" text-anchor="end" fill="#333333" stroke="#333333" stroke-width="0.18" letter-spacing="-0.05">211,247.87</text>
<rect x="552" y="374" width="464" height="1" fill="#eeeeee"/>
<text x="580.25" y="392.8" font-size="9.6" text-anchor="end" fill="#333333" stroke="#333333" stroke-width="0.18" letter-spacing="-0.05">10</text>
<text x="683.25" y="392.8" font-size="9.6" text-anchor="end" fill="#333333" stroke="#333333" stroke-width="0.18" letter-spacing="-0.05">0.00</text>
<text x="786.15" y="392.8" font-size="9.6" text-anchor="end" fill="#333333" stroke="#333333" stroke-width="0.18" letter-spacing="-0.05">5,000.00</text>
<text x="889.75" y="392.8" font-size="9.6" text-anchor="end" fill="#333333" stroke="#333333" stroke-width="0.18" letter-spacing="-0.05">1,584.36</text>
<text x="1014.35" y="392.8" font-size="9.6" text-anchor="end" fill="#333333" stroke="#333333" stroke-width="0.18" letter-spacing="-0.05">207,832.23</text>
<rect x="552" y="404" width="464" height="1" fill="#eeeeee"/>
<text x="580.25" y="422.8" font-size="9.6" text-anchor="end" fill="#333333" stroke="#333333" stroke-width="0.18" letter-spacing="-0.05">11</text>
<text x="683.25" y="422.8" font-size="9.6" text-anchor="end" fill="#333333" stroke="#333333" stroke-width="0.18" letter-spacing="-0.05">0.00</text>
<text x="786.15" y="422.8" font-size="9.6" text-anchor="end" fill="#333333" stroke="#333333" stroke-width="0.18" letter-spacing="-0.05">5,000.00</text>
<text x="889.75" y="422.8" font-size="9.6" text-anchor="end" fill="#333333" stroke="#333333" stroke-width="0.18" letter-spacing="-0.05">1,558.74</text>
<text x="1014.35" y="422.8" font-size="9.6" text-anchor="end" fill="#333333" stroke="#333333" stroke-width="0.18" letter-spacing="-0.05">204,390.97</text>
<rect x="552" y="434" width="464" height="1" fill="#eeeeee"/>
<text x="580.25" y="452.8" font-size="9.6" text-anchor="end" fill="#333333" stroke="#333333" stroke-width="0.18" letter-spacing="-0.05">12</text>
<text x="683.25" y="452.8" font-size="9.6" text-anchor="end" fill="#333333" stroke="#333333" stroke-width="0.18" letter-spacing="-0.05">0.00</text>
<text x="786.15" y="452.8" font-size="9.6" text-anchor="end" fill="#333333" stroke="#333333" stroke-width="0.18" letter-spacing="-0.05">5,000.00</text>
<text x="889.75" y="452.8" font-size="9.6" text-anchor="end" fill="#333333" stroke="#333333" stroke-width="0.18" letter-spacing="-0.05">1,532.93</text>
<text x="1014.35" y="452.8" font-size="9.6" text-anchor="end" fill="#333333" stroke="#333333" stroke-width="0.18" letter-spacing="-0.05">200,923.91</text>
<rect x="552" y="464" width="464" height="1" fill="#eeeeee"/>
<text x="580.25" y="482.8" font-size="9.6" text-anchor="end" fill="#333333" stroke="#333333" stroke-width="0.18" letter-spacing="-0.05">13</text>
<text x="683.25" y="482.8" font-size="9.6" text-anchor="end" fill="#333333" stroke="#333333" stroke-width="0.18" letter-spacing="-0.05">0.00</text>
<text x="786.15" y="482.8" font-size="9.6" text-anchor="end" fill="#333333" stroke="#333333" stroke-width="0.18" letter-spacing="-0.05">5,000.00</text>
<text x="889.75" y="482.8" font-size="9.6" text-anchor="end" fill="#333333" stroke="#333333" stroke-width="0.18" letter-spacing="-0.05">1,506.93</text>
<text x="1014.35" y="482.8" font-size="9.6" text-anchor="end" fill="#333333" stroke="#333333" stroke-width="0.18" letter-spacing="-0.05">197,430.84</text>
<rect x="552" y="494" width="464" height="1" fill="#eeeeee"/>
<text x="580.25" y="512.8" font-size="9.6" text-anchor="end" fill="#333333" stroke="#333333" stroke-width="0.18" letter-spacing="-0.05">14</text>
<text x="683.25" y="512.8" font-size="9.6" text-anchor="end" fill="#333333" stroke="#333333" stroke-width="0.18" letter-spacing="-0.05">0.00</text>
<text x="786.15" y="512.8" font-size="9.6" text-anchor="end" fill="#333333" stroke="#333333" stroke-width="0.18" letter-spacing="-0.05">5,000.00</text>
<text x="889.75" y="512.8" font-size="9.6" text-anchor="end" fill="#333333" stroke="#333333" stroke-width="0.18" letter-spacing="-0.05">1,480.73</text>
<text x="1014.35" y="512.8" font-size="9.6" text-anchor="end" fill="#333333" stroke="#333333" stroke-width="0.18" letter-spacing="-0.05">193,911.57</text>
<rect x="552" y="524" width="464" height="1" fill="#eeeeee"/>
<text x="580.25" y="542.8" font-size="9.6" text-anchor="end" fill="#333333" stroke="#333333" stroke-width="0.18" letter-spacing="-0.05">15</text>
<text x="683.25" y="542.8" font-size="9.6" text-anchor="end" fill="#333333" stroke="#333333" stroke-width="0.18" letter-spacing="-0.05">0.00</text>
<text x="786.15" y="542.8" font-size="9.6" text-anchor="end" fill="#333333" stroke="#333333" stroke-width="0.18" letter-spacing="-0.05">5,000.00</text>
<text x="889.75" y="542.8" font-size="9.6" text-anchor="end" fill="#333333" stroke="#333333" stroke-width="0.18" letter-spacing="-0.05">1,454.34</text>
<text x="1014.35" y="542.8" font-size="9.6" text-anchor="end" fill="#333333" stroke="#333333" stroke-width="0.18" letter-spacing="-0.05">190,365.90</text>
<rect x="552" y="554" width="464" height="1" fill="#eeeeee"/>
<text x="580.25" y="572.8" font-size="9.6" text-anchor="end" fill="#333333" stroke="#333333" stroke-width="0.18" letter-spacing="-0.05">16</text>
<text x="683.25" y="572.8" font-size="9.6" text-anchor="end" fill="#333333" stroke="#333333" stroke-width="0.18" letter-spacing="-0.05">0.00</text>
<text x="786.15" y="572.8" font-size="9.6" text-anchor="end" fill="#333333" stroke="#333333" stroke-width="0.18" letter-spacing="-0.05">5,000.00</text>
<text x="889.75" y="572.8" font-size="9.6" text-anchor="end" fill="#333333" stroke="#333333" stroke-width="0.18" letter-spacing="-0.05">1,427.74</text>
<text x="1014.35" y="572.8" font-size="9.6" text-anchor="end" fill="#333333" stroke="#333333" stroke-width="0.18" letter-spacing="-0.05">186,793.65</text>
<rect x="552" y="584" width="464" height="1" fill="#eeeeee"/>
</svg>
</body></html>
